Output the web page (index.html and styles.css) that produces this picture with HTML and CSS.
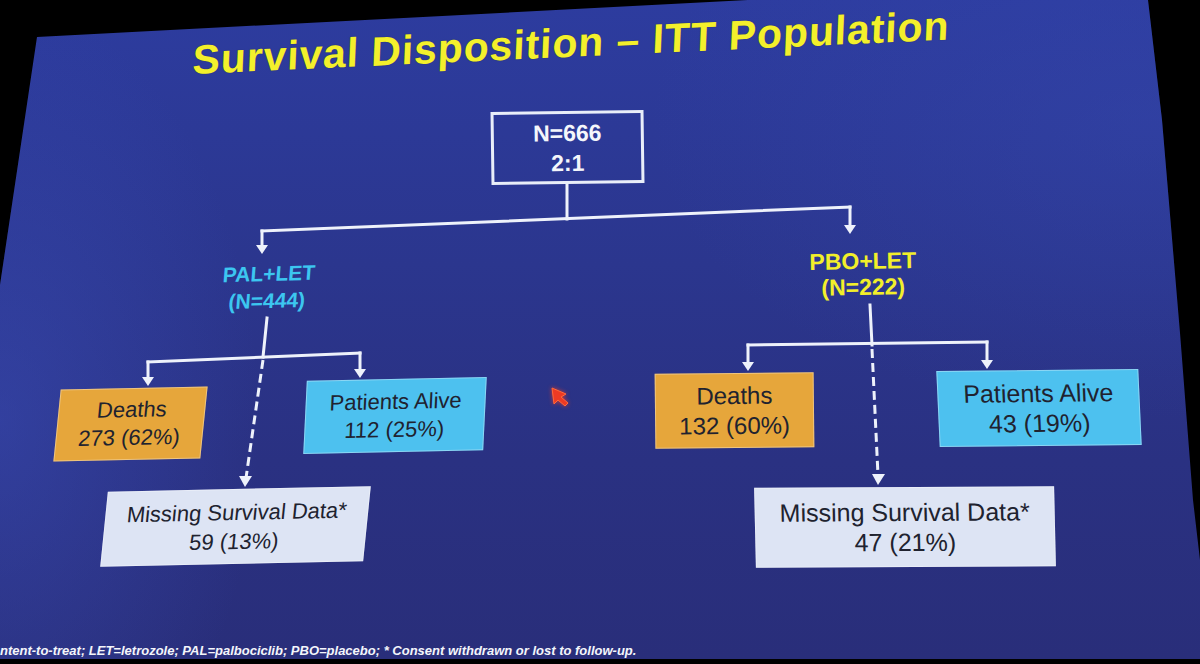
FILE: index.html
```html
<!DOCTYPE html>
<html lang="en">
<head>
<meta charset="utf-8">
<title>Survival Disposition – ITT Population</title>
<link rel="stylesheet" href="styles.css">
</head>
<body>
<div class="stage">
  <div class="slide">
    <h1 class="title">Survival Disposition – ITT Population</h1>

    <div class="diagram">
      <svg class="links" width="1200" height="659" viewBox="0 0 1200 659" aria-hidden="true">
        <g class="solid">
          <path d="M567 184 V219"/>
          <path d="M262 231 L850 207"/>
          <path d="M262 231 V246"/>
          <path d="M850 207 V226"/>
          <path d="M267 318 L263 357"/>
          <path d="M148 362 L360 353"/>
          <path d="M148 362 V378"/>
          <path d="M360 353 V370"/>
          <path d="M870 305 L872 345"/>
          <path d="M748 345 L987 342"/>
          <path d="M748 345 V363"/>
          <path d="M987 342 V361"/>
        </g>
        <g class="dashed">
          <path d="M263 360 L246 478"/>
          <path d="M872 349 L878 475"/>
        </g>
        <g class="heads">
          <polygon points="256,245 268,245 262,254"/>
          <polygon points="844,225 856,225 850,234"/>
          <polygon points="142,377 154,377 148,386"/>
          <polygon points="354,369 366,369 360,378"/>
          <polygon points="742,362 754,362 748,371"/>
          <polygon points="981,360 993,360 987,369"/>
          <polygon points="239,476 252,476 245,487"/>
          <polygon points="872,474 885,474 878,485"/>
        </g>
        <polygon class="pointer" points="552,388 566,394 561,397 568,403 565,406 558,400 554,404"/>
      </svg>

      <div class="node root"><span>N=666</span><span>2:1</span></div>

      <div class="label pal"><span>PAL+LET</span><span>(N=444)</span></div>
      <div class="label pbo"><span>PBO+LET</span><span>(N=222)</span></div>

      <div class="node box deaths deaths-l"><span>Deaths</span><span>273 (62%)</span></div>
      <div class="node box alive alive-l"><span>Patients Alive</span><span>112 (25%)</span></div>
      <div class="node box missing missing-l"><span>Missing Survival Data*</span><span>59 (13%)</span></div>

      <div class="node box deaths deaths-r"><span>Deaths</span><span>132 (60%)</span></div>
      <div class="node box alive alive-r"><span>Patients Alive</span><span>43 (19%)</span></div>
      <div class="node box missing missing-r"><span>Missing Survival Data*</span><span>47 (21%)</span></div>
    </div>

    <p class="footnote">ntent-to-treat; LET=letrozole; PAL=palbociclib; PBO=placebo; * Consent withdrawn or lost to follow-up.</p>
  </div>
</div>
</body>
</html>
```

FILE: styles.css
```css
html, body {
  margin: 0;
  padding: 0;
  background: #000;
}

.stage {
  width: 1200px;
  height: 664px;
  background: #000;
  overflow: hidden;
  font-family: "Liberation Sans", Arial, Helvetica, sans-serif;
}

.slide {
  position: relative;
  height: 659px;
  display: flex;
  flex-direction: column;
  align-items: flex-start;
  padding-top: 36px;
  box-sizing: border-box;
}

.slide::before {
  content: "";
  position: absolute;
  left: 0;
  top: 0;
  width: 100%;
  height: 100%;
  clip-path: polygon(0 285px, 37px 37px, 748px 0, 1148px 0, 1162px 120px, 1180px 333px, 1193px 500px, 1200px 560px, 1200px 659px, 0 659px);
  background:
    radial-gradient(ellipse 260px 420px at 0 420px, rgba(60, 80, 190, 0.45), rgba(60, 80, 190, 0) 100%),
    radial-gradient(ellipse 500px 300px at 1150px 120px, rgba(55, 75, 180, 0.35), rgba(55, 75, 180, 0) 100%),
    linear-gradient(180deg, #2d3c9f 0%, #2b368e 40%, #2a3182 70%, #292e7a 100%);
}

.title {
  position: relative;
  z-index: 1;
  margin: 0 0 0 192px;
  font-size: 41px;
  line-height: 48px;
  font-weight: 700;
  letter-spacing: 0.9px;
  color: #f3f02c;
  white-space: nowrap;
  transform-origin: 0 38px;
  transform: rotate(-2.6deg) skewX(-5deg);
  text-shadow: 0 0 1px rgba(40, 40, 0, 0.6);
}

.diagram {
  position: absolute;
  left: 0;
  top: 0;
  width: 1200px;
  height: 659px;
}

.links {
  position: absolute;
  left: 0;
  top: 0;
}

.links .solid path,
.links .dashed path {
  fill: none;
  stroke: #eef2fb;
  stroke-width: 3;
  stroke-linecap: square;
}

.links .dashed path {
  stroke-dasharray: 9 5;
  stroke-linecap: butt;
}

.links .heads polygon {
  fill: #eef2fb;
}

.links .pointer {
  fill: #ee3a24;
  stroke: #ff6a3a;
  stroke-width: 1;
  filter: drop-shadow(0 0 2px rgba(255, 60, 30, 0.8));
}

.node,
.label {
  position: absolute;
  display: flex;
  flex-direction: column;
  align-items: center;
  justify-content: center;
  box-sizing: border-box;
  white-space: nowrap;
}

.root {
  left: 491px;
  top: 111px;
  width: 153px;
  height: 73px;
  border: 3px solid #e9eef9;
  color: #f4f6fb;
  font-weight: 700;
  font-size: 23px;
  line-height: 30px;
  transform: rotate(-0.8deg);
}

.label {
  font-weight: 700;
}

.pal {
  left: 200px;
  top: 260px;
  width: 136px;
  font-size: 21px;
  line-height: 27px;
  color: #3cc6f0;
  transform: rotate(-1.5deg) skewX(-6deg);
}

.pbo {
  left: 795px;
  top: 248px;
  width: 136px;
  font-size: 23px;
  line-height: 26px;
  color: #f2ef2a;
  transform: rotate(-1deg);
}

.box {
  border: 1.5px solid rgba(255, 255, 255, 0.35);
  color: #20222f;
}

.deaths {
  background: #e6a63b;
}

.alive {
  background: #4dc1ef;
}

.missing {
  background: #dde4f4;
}

.deaths-l {
  left: 57px;
  top: 388px;
  width: 147px;
  height: 72px;
  font-size: 22px;
  line-height: 28px;
  transform: rotate(-1.2deg) skewX(-7deg);
}

.alive-l {
  left: 305px;
  top: 379px;
  width: 180px;
  height: 73px;
  font-size: 22px;
  line-height: 28px;
  transform: rotate(-1.2deg) skewX(-4deg);
}

.missing-l {
  left: 104px;
  top: 489px;
  width: 263px;
  height: 75px;
  font-size: 22px;
  line-height: 29px;
  transform: rotate(-1.2deg) skewX(-7deg);
}

.deaths-r {
  left: 655px;
  top: 373px;
  width: 159px;
  height: 75px;
  font-size: 24px;
  line-height: 30px;
  transform: rotate(-0.6deg);
}

.alive-r {
  left: 938px;
  top: 370px;
  width: 202px;
  height: 76px;
  font-size: 25px;
  line-height: 30px;
  transform: rotate(-0.6deg) skewX(2deg);
}

.missing-r {
  left: 755px;
  top: 487px;
  width: 300px;
  height: 80px;
  font-size: 25px;
  line-height: 30px;
  transform: rotate(-0.3deg) skewX(1deg);
}

.footnote {
  align-self: stretch;
  margin: auto 0 0 0;
  padding: 0 0 1px 0;
  font-size: 13px;
  line-height: 15px;
  font-weight: 700;
  font-style: italic;
  color: #f4f6fb;
  white-space: nowrap;
  position: relative;
}
```
